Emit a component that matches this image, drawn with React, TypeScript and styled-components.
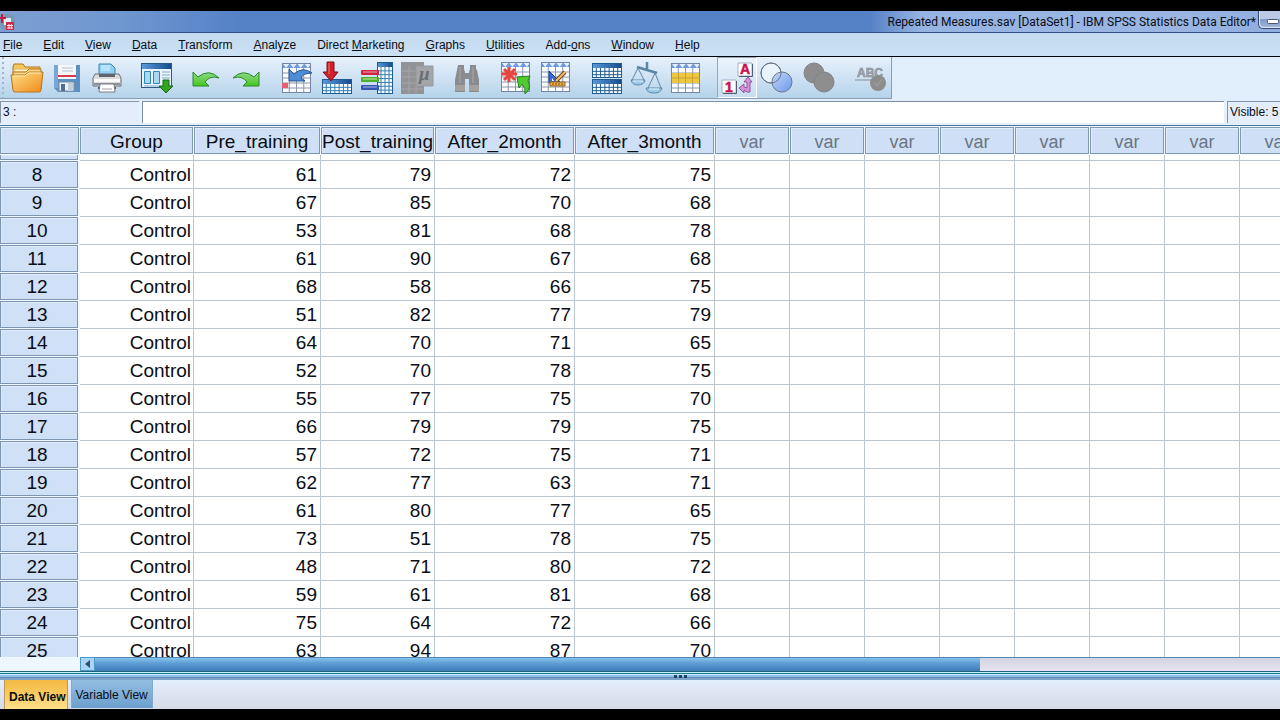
import React from "react";
import styled, { createGlobalStyle } from "styled-components";

const GlobalStyle = createGlobalStyle`
  *, *::before, *::after { box-sizing: border-box; }
  body { margin: 0; background: #000; font-family: "Liberation Sans", Arial, sans-serif; color: #0a0d14; }
  button, input { font: inherit; color: inherit; }
`;

const Window = styled.div`
  display: flex;
  flex-direction: column;
  height: 100vh;
  padding: 11px 0;
  background: #000;
  overflow: hidden;
`;

const TitleBar = styled.header`
  flex: none;
  display: flex;
  align-items: center;
  height: 22px;
  background: linear-gradient(90deg, #7d9fd2 0, #6f97d0 120px, #5581c6 240px, #5581c6 68%, #96b4e2 72%, #9ab5e2 92%, #8fadde 100%);
  border-bottom: 1px solid #2d4f86;
`;

const Title = styled.h1`
  margin: 0 2px 0 auto;
  font: 400 12px/20px Roboto, "Segoe UI", sans-serif;
  white-space: nowrap;
`;

const MinimizeButton = styled.button`
  flex: none;
  display: flex;
  align-self: flex-start;
  align-items: center;
  justify-content: flex-end;
  width: 22px;
  height: 18px;
  padding: 3px 1px 0 0;
  border: 1px solid #35496f;
  border-width: 0 0 1px 1px;
  border-radius: 0 0 0 5px;
  background: linear-gradient(#b9c9e6 45%, #7f98c6 50%, #a3b8dd);
  box-shadow: inset 1px -1px 0 #dce6f7;
`;

const MenuBar = styled.nav`
  flex: none;
  display: flex;
  align-items: center;
  gap: 21px;
  height: 24px;
  padding-left: 3px;
  background: linear-gradient(#c3daf0, #cbe1f4);
  border-bottom: 1px solid #05070c;
`;

const MenuButton = styled.button`
  padding: 0;
  border: 0;
  background: none;
  font-size: 12px;
  line-height: 16px;
  white-space: nowrap;
`;

const ToolbarStrip = styled.div`
  flex: none;
  display: flex;
  height: 44px;
  padding-bottom: 2px;
  background: #e0effb;
`;

const Toolbar = styled.div`
  display: flex;
  gap: 10px;
  padding-right: 4px;
  background: linear-gradient(#e6f1fb, #cfe2f4 50%, #b4d3ea);
  border-right: 1px solid #8b9db2;
  border-bottom: 1px solid #8b9db2;
`;

const Grip = styled.div`
  width: 7px;
  margin-right: -10px;
  padding-left: 2px;
  &::before {
    content: "";
    display: block;
    width: 2px;
    height: 100%;
    background: repeating-linear-gradient(#a3b3cb 0 2px, transparent 2px 5px);
  }
`;

const ToolGroup = styled.div`
  display: flex;
`;

const ToolButton = styled.button<{ $pressed?: boolean }>`
  display: flex;
  align-items: center;
  justify-content: center;
  width: 40px;
  padding: 0;
  border: 1px solid transparent;
  border-color: ${(p) => (p.$pressed ? "#98a9bd #fff #fff #98a9bd" : "transparent")};
  background: ${(p) => (p.$pressed ? "rgba(255,255,255,0.25)" : "none")};
  svg { display: block; flex: none; overflow: visible; }
`;

const CellBar = styled.div`
  flex: none;
  display: grid;
  grid-template-columns: 139px 1fr 53px;
  gap: 3px;
  height: 24px;
  padding-bottom: 3px;
  background: #e4f1fd;
  font-size: 12px;
`;

const CellRef = styled.output`
  padding-left: 2px;
  line-height: 21px;
  background: #e3edfb;
  border: 1px solid #8594a8;
  border-width: 1px 0 0 1px;
`;

const CellInput = styled.input`
  min-width: 0;
  width: 100%;
  padding: 0 4px;
  border: 1px solid #7d8ea3;
  border-width: 1px 0 0 1px;
  border-radius: 0;
  background: #fff;
  outline: none;
`;

const VisibleCount = styled(CellRef)`
  white-space: nowrap;
  overflow: hidden;
`;

const GridPane = styled.main`
  flex: 1;
  min-height: 0;
  overflow: hidden;
  background: #fff;
  border-top: 1px solid #46749c;
`;

const Sheet = styled.table`
  width: 1315px;
  table-layout: fixed;
  border-collapse: separate;
  border-spacing: 0;
  font-size: 19px;
  line-height: 26px;
`;

const HeadCell = styled.th`
  height: 29px;
  padding: 1px 1px 1px 0;
  font-weight: 400;
  background: #f2f9ff;
`;

const HeadBox = styled.div<{ $unused?: boolean }>`
  height: 27px;
  border: 1px solid #7e98b0;
  background: #cfe0f6;
  box-shadow: inset 1px 1px 0 #e2eefb;
  text-align: center;
  white-space: nowrap;
  line-height: 28px;
  font-size: ${(p) => (p.$unused ? "18px" : "19px")};
  color: ${(p) => (p.$unused ? "#6b7583" : "#0a0d14")};
`;

const RowHead = styled.th`
  padding: 0 2px 1px 0;
  font-weight: 400;
  background: #f2f9ff;
`;

const RowBox = styled.div<{ $clipped?: boolean }>`
  height: ${(p) => (p.$clipped ? "5px" : "27px")};
  padding-right: 4px;
  border: 1px solid #7e95b2;
  border-top-width: ${(p) => (p.$clipped ? "0" : "1px")};
  background: #cfe0f7;
  box-shadow: inset 1px 1px 0 #dfebfb;
  line-height: 25px;
`;

const Cell = styled.td<{ $numeric?: boolean }>`
  height: 28px;
  padding: 0 ${(p) => (p.$numeric ? "3px" : "2px")} 0 0;
  border-right: 1px solid #bcc6ce;
  border-bottom: 1px solid #bcc6ce;
  text-align: right;
  white-space: nowrap;
`;

const ClippedCell = styled.td`
  height: 6px;
  padding: 0;
  border-right: 1px solid #bcc6ce;
  border-bottom: 1px solid #bcc6ce;
`;

const ScrollRow = styled.div`
  flex: none;
  display: flex;
  height: 14px;
  padding-left: 80px;
  background: #eff7fe;
`;

const ScrollArrow = styled.button`
  display: flex;
  align-items: center;
  justify-content: center;
  width: 15px;
  padding: 0;
  border: 1px solid #4d9ac9;
  background: #a9d4f3;
`;

const ScrollTrack = styled.div`
  flex: 1;
  background: linear-gradient(#d2d4e2, #e9e3f0);
  border-top: 1px solid #5587b5;
`;

const ScrollThumb = styled.div`
  width: 74.7%;
  height: 100%;
  background: linear-gradient(#86c3ee, #5b9ad0 45%, #3c7cb8);
`;

const Splitter = styled.div`
  flex: none;
  display: flex;
  justify-content: center;
  height: 9px;
  padding: 4px 0 0 82px;
  background: linear-gradient(#20627f 0 1px, #c2f0fa 1px 2px, #20788f 2px 3px, #c9ecfa 3px 4px, #8fc2e8 4px 6px, #5f8dbb 6px 7px, #7da3c9 7px 9px);
`;

const TabBar = styled.div`
  flex: none;
  display: flex;
  gap: 3px;
  height: 29px;
  padding-left: 4px;
  background: linear-gradient(#e2f0fd, #dfe6f4 35%, #d8dbe8);
`;

const Tab = styled.button<{ $active?: boolean }>`
  height: ${(p) => (p.$active ? "29px" : "28px")};
  padding: ${(p) => (p.$active ? "4px 2px 0 4px" : "2px 4px 0 3px")};
  border: 1px solid ${(p) => (p.$active ? "#b99a5c" : "#7fa9cf")};
  border-width: 0 1px;
  background: ${(p) => (p.$active ? "linear-gradient(#f3b845, #fbcb5e 50%, #ffe08c)" : "linear-gradient(#92bde1, #6d9fce)")};
  font-size: 12px;
  font-weight: ${(p) => (p.$active ? 700 : 400)};
  white-space: nowrap;
`;

type GridProps = {
  x?: number;
  y?: number;
  w: number;
  h: number;
  cols: number;
  rows: number;
  head?: number;
  line?: string;
  ticks?: boolean;
};

/* Small data-sheet drawing shared by most toolbar icons */
function MiniGrid({ x = 0, y = 0, w, h, cols, rows, head = 5, line = "#8b97ab", ticks }: GridProps) {
  const cw = w / cols;
  const rh = (h - head) / rows;
  return (
    <g>
      <rect x={x} y={y} width={w} height={h} fill="#fcfdff" />
      <path
        d={
          Array.from({ length: cols - 1 }, (_, i) => `M${x + cw * (i + 1)} ${y + head}v${h - head}`).join("") +
          Array.from({ length: rows - 1 }, (_, i) => `M${x} ${y + head + rh * (i + 1)}h${w}`).join("")
        }
        stroke={line}
        fill="none"
      />
      <rect x={x} y={y} width={w} height={head} fill={ticks ? "#6f9ade" : "url(#sheetHead)"} />
      {ticks &&
        Array.from({ length: cols }, (_, i) => (
          <path key={i} d={`M${x + cw * i + 1} ${y + 1}h${cw - 1}l-${(cw - 1) / 2} 4z`} fill="#e6effc" />
        ))}
      <rect x={x + 0.5} y={y + 0.5} width={w - 1} height={h - 1} fill="none" stroke={ticks ? "#7485a5" : "#1d5d93"} />
    </g>
  );
}

const icons: Record<string, React.ReactNode> = {
  "Open data document": (
    <g stroke="#b8741c" strokeLinejoin="round">
      <path d="M2 27V5l1-3h9l2 3h15v22z" fill="#f7c85c" />
      <path d="M3 7h26v3H3z" fill="#fff3cd" stroke="#dbb46a" />
      <path d="M2 10h13l3-3h12v20H3z" fill="#fbd98a" />
      <path d="M0 13h14l4-3h14l-2 18q0 2-2 2H4q-2 0-2-2z" fill="url(#folder)" />
      <path d="M2 14h12l4-3h12" stroke="#fff0b8" fill="none" />
    </g>
  ),
  "Save this document": (
    <g>
      <path d="M3 3h26v27H7l-4-4z" fill="#5b90c6" />
      <path d="M3 3h4v23H3z" fill="#78a7d6" />
      <path d="M7 3h18v14H7z" fill="#f4f7fb" />
      <path d="M7 14h18" stroke="#d83a49" strokeWidth="2" />
      <path d="M11 6h11M11 9h11" stroke="#b5bfcb" />
      <path d="M8 20h15v9H8z" fill="#eef1f5" stroke="#7d8da1" />
      <path d="M10 22h4v7h-4z" fill="#4d6f96" />
      <path d="M17 21h5v8h-5z" fill="#c6cdd6" />
    </g>
  ),
  Print: (
    <g>
      <path d="M8 13V2h12l4 4v7z" fill="#8fd0f3" stroke="#4584ad" />
      <path d="M10 3h9v6h-9z" fill="#b4e3fb" />
      <path d="M4 12h24l2 4v8H2v-8z" fill="#d9dbdf" stroke="#6d7076" />
      <path d="M8 12h16v3H8z" fill="#60646b" />
      <path d="M3 17h26v3H3z" fill="#fafafb" />
      <path d="M3 21h26v2H3z" fill="#8f9399" />
      <path d="M7 25h18v2H7z" fill="#4c5057" />
      <path d="M9 22h14l1 8H8z" fill="#fff" stroke="#7b7f86" />
      <path d="M11 27h10" stroke="#9ba2ab" />
    </g>
  ),
  "Recall recently used dialogs": (
    <g>
      <rect x="0.5" y="1.5" width="30" height="24" fill="#e9f4fc" stroke="#2b5a87" />
      <rect x="1" y="2" width="29" height="5" fill="url(#sheetHead)" />
      <path d="M3.5 9.5h6v12h-6zM12.5 9.5h6v12h-6z" fill="#a9d8f2" stroke="#2f86ba" />
      <path d="M3 24h15M21 10h8M21 13h8M21 16h8" stroke="#86a9c4" />
      <path d="M22 18h6v6h4l-7 7-7-7h4z" fill="#31a51f" stroke="#176b14" />
    </g>
  ),
  Undo: (
    <path d="M2 10l5 5Q18 6 28 16q-9-3-14 4l4 4H2z" fill="url(#greenArrow)" stroke="#2b8730" strokeLinejoin="round" />
  ),
  Redo: (
    <path d="M28 10l-5 5Q12 6 2 16q9-3 14 4l-4 4h16z" fill="url(#greenArrow)" stroke="#2b8730" strokeLinejoin="round" />
  ),
  "Go to case": (
    <g>
      <MiniGrid x={1} y={1} w={29} h={30} cols={4} rows={5} ticks />
      <path d="M1 21h6v5H1z" fill="#e5606a" />
      <path d="M8 19V7l5 5q9-8 18-1-9 0-11 5l4 3z" fill="#4f8cd6" stroke="#2a5694" strokeLinejoin="round" />
    </g>
  ),
  "Insert cases": (
    <g>
      <MiniGrid x={1} y={17} w={30} h={15} cols={7} rows={3} line="#2f7fb8" />
      <path d="M6 0h7v10h4l-7 9-8-9h4z" fill="#d2202b" stroke="#7e1119" strokeLinejoin="round" />
      <path d="M8 1v11" stroke="#f07b7d" />
    </g>
  ),
  Variables: (
    <g>
      <MiniGrid x={16} y={0} w={16} h={32} cols={4} rows={7} line="#2f7fb8" />
      {[
        [8, "#cf2540", "#f3a3ae"],
        [15, "#4fae2c", "#c1eca5"],
        [23, "#3657b0", "#a5b8ec"],
      ].map(([y, dark, light]) => (
        <g key={y}>
          <rect x="0" y={y} width="18" height="5" rx="1" fill={String(dark)} />
          <path d={`M2 ${Number(y) + 2}h14`} stroke={String(light)} />
        </g>
      ))}
    </g>
  ),
  "Run descriptive statistics": (
    <g>
      <path d="M0 0h23v32H0z" fill="#919396" />
      <path d="M1 9h14M1 15h14M1 21h14M1 27h21M8 4v27M15 24v8" stroke="#a3a5a8" fill="none" />
      <path d="M15 4h17v20H15z" fill="#a3a5a8" stroke="#97999c" />
      <text x="18" y="18" fontFamily="Liberation Serif, serif" fontStyle="italic" fontWeight="700" fontSize="19" fill="#6c6e73">μ</text>
    </g>
  ),
  Find: (
    <g fill="#898b8e">
      <path d="M7 3h6v4l1 3v20H4V18L6 8zM19 3h6v4l1 1 2 10v12H18V10l1-3z" />
      <path d="M13 11h6v6h-6z" />
      <path d="M4 23h10v6H4zM18 23h10v6H18z" fill="#a3a09d" />
      <path d="M9 5v16M22 5v16" stroke="#989a9d" strokeWidth="2" />
    </g>
  ),
  "Insert variable": (
    <g>
      <MiniGrid w={29} h={30} cols={4} rows={5} ticks />
      <path d="M8 5v15M1 12h15M3 7l11 11M14 7L3 18" stroke="#e8443f" strokeWidth="3" />
      <path d="M16 15l13-1-2 5q4 7-3 13 1-6-3-10l-3 4z" fill="#52c92f" stroke="#24801d" strokeLinejoin="round" />
    </g>
  ),
  "Define variable properties": (
    <g>
      <MiniGrid w={29} h={30} cols={4} rows={5} ticks />
      <path d="M8 9l12 12H8z" fill="#3a6ad1" stroke="#1c3f8d" />
      <path d="M11 16l2 3h-2z" fill="#fff" />
      <path d="M24 10l-9 9" stroke="#6e4320" strokeWidth="4" />
      <path d="M24 10l-9 9" stroke="#f3c069" strokeWidth="2" />
      <path d="M9 20h15v4H9z" fill="#eeb247" stroke="#94601e" />
      <path d="M12 21v2M15 21v2M18 21v2M21 21v2" stroke="#7c4d14" />
    </g>
  ),
  "Split file": (
    <g>
      <MiniGrid x={1} y={1} w={30} h={15} cols={7} rows={3} line="#1f5e94" />
      <MiniGrid x={1} y={17} w={30} h={15} cols={7} rows={3} line="#1f5e94" />
    </g>
  ),
  "Weight cases": (
    <g fill="none" stroke="#5d87a6">
      <path d="M6 5l20 6M16 0v8" strokeWidth="2.5" />
      <path d="M7 6L1 18M7 6l6 12M24 11l-7 15M24 11l6 15" />
      <path d="M0 18h14q-1 5-7 5t-7-5z" fill="#9acbe9" />
      <path d="M15 26h16q-1 5-8 5t-8-5z" fill="#9acbe9" />
      <path d="M2 19h10M18 27h10" stroke="#e3f6ff" />
    </g>
  ),
  "Select cases": (
    <g>
      <MiniGrid y={1} w={29} h={30} cols={4} rows={5} ticks />
      <path d="M1 11h27v10H1z" fill="#efc83d" />
      <path d="M0 16h29M7.500 11v10M14.500 11v10M21.500 11v10" stroke="#c7a13a" />
    </g>
  ),
  "Value labels": (
    <g>
      <path d="M17 1h14v13H17zM1 18h14v13H1z" fill="#fff" stroke="#a5b1c3" />
      <path d="M31.5 2v12.500H18M15.5 19v12.500H2" stroke="#4f5d73" fill="none" />
      <g fontFamily="Liberation Sans, sans-serif" fontWeight="700" fontSize="14" fill="#c9104c" stroke="#c9104c" strokeWidth="0.5">
        <text x="19" y="12">A</text>
        <text x="4" y="30">1</text>
      </g>
      <path d="M27 15l4 5h-2v10h-3l-3-2v3l-5-5 5-4v3l3 1v-6h-3z" fill="#d993dc" stroke="#91519b" />
    </g>
  ),
  "Use variable sets": (
    <g stroke="#6b7785">
      <circle cx="10" cy="11" r="10" fill="#e9f3fb" />
      <circle cx="21" cy="20" r="10" fill="url(#blueDisc)" />
      <circle cx="10" cy="11" r="10" fill="none" />
    </g>
  ),
  "Show all variables": (
    <g fill="#8d8d8e" stroke="#828386">
      <circle cx="13" cy="11" r="10" />
      <circle cx="23" cy="20" r="10" />
    </g>
  ),
  "Spell check": (
    <g>
      <text x="6" y="15" fontFamily="Liberation Sans, sans-serif" fontWeight="700" fontSize="12" fill="#a1a7af" stroke="#7d858f" strokeWidth="0.5">ABC</text>
      <path d="M4 18h18" stroke="#87909b" />
      <circle cx="27" cy="21" r="8" fill="#8d8d8d" />
      <path d="M23 21l3 3 5-7" stroke="#989898" strokeWidth="2" fill="none" />
    </g>
  ),
};

const toolGroups = [
  ["Open data document", "Save this document", "Print"],
  ["Recall recently used dialogs"],
  ["Undo", "Redo"],
  ["Go to case", "Insert cases", "Variables", "Run descriptive statistics"],
  ["Find"],
  ["Insert variable", "Define variable properties"],
  ["Split file", "Weight cases", "Select cases"],
  ["Value labels", "Use variable sets", "Show all variables"],
  ["Spell check"],
];

/* label and index of the underlined access key */
const menus: [string, number][] = [
  ["File", 0],
  ["Edit", 0],
  ["View", 0],
  ["Data", 0],
  ["Transform", 0],
  ["Analyze", 0],
  ["Direct Marketing", 7],
  ["Graphs", 0],
  ["Utilities", 0],
  ["Add-ons", 4],
  ["Window", 0],
  ["Help", 0],
];

const columns = ["Group", "Pre_training", "Post_training", "After_2month", "After_3month"];
const columnWidths = [80, 114, 127, 114, 140, 140];
const unusedColumns = [0, 1, 2, 3, 4, 5, 6, 7];

const firstCase = 8;
const cases = [
  [61, 79, 72, 75],
  [67, 85, 70, 68],
  [53, 81, 68, 78],
  [61, 90, 67, 68],
  [68, 58, 66, 75],
  [51, 82, 77, 79],
  [64, 70, 71, 65],
  [52, 70, 78, 75],
  [55, 77, 75, 70],
  [66, 79, 79, 75],
  [57, 72, 75, 71],
  [62, 77, 63, 71],
  [61, 80, 77, 65],
  [73, 51, 78, 75],
  [48, 71, 80, 72],
  [59, 61, 81, 68],
  [75, 64, 72, 66],
  [63, 94, 87, 70],
];

function IconGradients() {
  const stops = (a: string, b: string) => (
    <>
      <stop offset="0" stopColor={a} />
      <stop offset="1" stopColor={b} />
    </>
  );
  return (
    <defs>
      <linearGradient id="sheetHead">{stops("#5c9bdc", "#134b8c")}</linearGradient>
      <linearGradient id="folder" x1="0" y1="0" x2="1" y2="1">{stops("#ffdf8a", "#f08a18")}</linearGradient>
      <linearGradient id="greenArrow" x1="0" y1="0" x2="0" y2="1">{stops("#8fd989", "#45c81e")}</linearGradient>
      <linearGradient id="blueDisc" x1="0" y1="0" x2="1" y2="1">{stops("#c3d8fa", "#6c98ea")}</linearGradient>
    </defs>
  );
}

export default function App() {
  return (
    <Window>
      <GlobalStyle />
      <TitleBar>
        <svg width="15" height="18" viewBox="0 0 15 18" aria-hidden="true">
          <path d="M4 1h7l4 4v9l-3 3H3l-3-4V5z" fill="#7699b5" />
          <path d="M4 5h7v7H4z" fill="#e6edf4" />
          <path d="M2 1v9M0 5h6" stroke="#c51d3b" strokeWidth="2" />
          <path d="M6 9h8v8H6z" fill="#c92a49" />
          <path d="M7 12.500h6M7 15h6M9 11v5M11.500 11v5" stroke="#f6dfe5" />
        </svg>
        <Title>Repeated Measures.sav [DataSet1] - IBM SPSS Statistics Data Editor*</Title>
        <MinimizeButton aria-label="Minimize">
          <svg width="12" height="5" viewBox="0 0 12 5" aria-hidden="true">
            <rect x="0.5" y="0.5" width="11" height="4" rx="1" fill="#fff" stroke="#4a5774" />
          </svg>
        </MinimizeButton>
      </TitleBar>

      <MenuBar aria-label="Main menu">
        {menus.map(([label, key]) => (
          <MenuButton key={label}>
            {label.slice(0, key)}
            <u>{label[key]}</u>
            {label.slice(key + 1)}
          </MenuButton>
        ))}
      </MenuBar>

      <ToolbarStrip>
        <Toolbar role="toolbar" aria-label="Data editor tools">
          <Grip />
          {toolGroups.map((group, i) => (
            <ToolGroup key={group[0]}>
              {group.map((name, j) => (
                <ToolButton key={name} aria-label={name} $pressed={name === "Value labels"}>
                  <svg width="32" height="32" viewBox="0 0 32 32" aria-hidden="true">
                    {i + j === 0 && <IconGradients />}
                    {icons[name]}
                  </svg>
                </ToolButton>
              ))}
            </ToolGroup>
          ))}
        </Toolbar>
      </ToolbarStrip>

      <CellBar>
        <CellRef>3 :</CellRef>
        <CellInput aria-label="Cell value" />
        <VisibleCount>Visible: 5</VisibleCount>
      </CellBar>

      <GridPane>
        <Sheet>
          <colgroup>
            {columnWidths.map((w, i) => (
              <col key={i} width={w} />
            ))}
            {unusedColumns.map((c) => (
              <col key={c} width={75} />
            ))}
          </colgroup>
          <thead>
            <tr>
              <HeadCell>
                <HeadBox />
              </HeadCell>
              {columns.map((name) => (
                <HeadCell key={name} scope="col">
                  <HeadBox>{name}</HeadBox>
                </HeadCell>
              ))}
              {unusedColumns.map((c) => (
                <HeadCell key={c} scope="col">
                  <HeadBox $unused>var</HeadBox>
                </HeadCell>
              ))}
            </tr>
          </thead>
          <tbody>
            <tr>
              <RowHead>
                <RowBox $clipped />
              </RowHead>
              {columns.map((c) => (
                <ClippedCell key={c} />
              ))}
              {unusedColumns.map((c) => (
                <ClippedCell key={c} />
              ))}
            </tr>
            {cases.map((scores, i) => (
              <tr key={i}>
                <RowHead scope="row">
                  <RowBox>{firstCase + i}</RowBox>
                </RowHead>
                <Cell>Control</Cell>
                {scores.map((score, j) => (
                  <Cell key={j} $numeric>
                    {score}
                  </Cell>
                ))}
                {unusedColumns.map((c) => (
                  <Cell key={c} />
                ))}
              </tr>
            ))}
          </tbody>
        </Sheet>
      </GridPane>

      <ScrollRow>
        <ScrollArrow aria-label="Scroll left">
          <svg width="6" height="8" viewBox="0 0 6 8" aria-hidden="true">
            <path d="M5 0v8L0 4z" fill="#2f5170" />
          </svg>
        </ScrollArrow>
        <ScrollTrack>
          <ScrollThumb />
        </ScrollTrack>
      </ScrollRow>
      <Splitter>
        <svg width="14" height="3" viewBox="0 0 14 3" aria-hidden="true">
          <path d="M0 0h3v3H0zM5 0h3v3H5zM10 0h3v3h-3z" fill="#1d4263" />
        </svg>
      </Splitter>

      <TabBar role="tablist">
        <Tab role="tab" aria-selected="true" $active>
          Data View
        </Tab>
        <Tab role="tab" aria-selected="false">
          Variable View
        </Tab>
      </TabBar>
    </Window>
  );
}
